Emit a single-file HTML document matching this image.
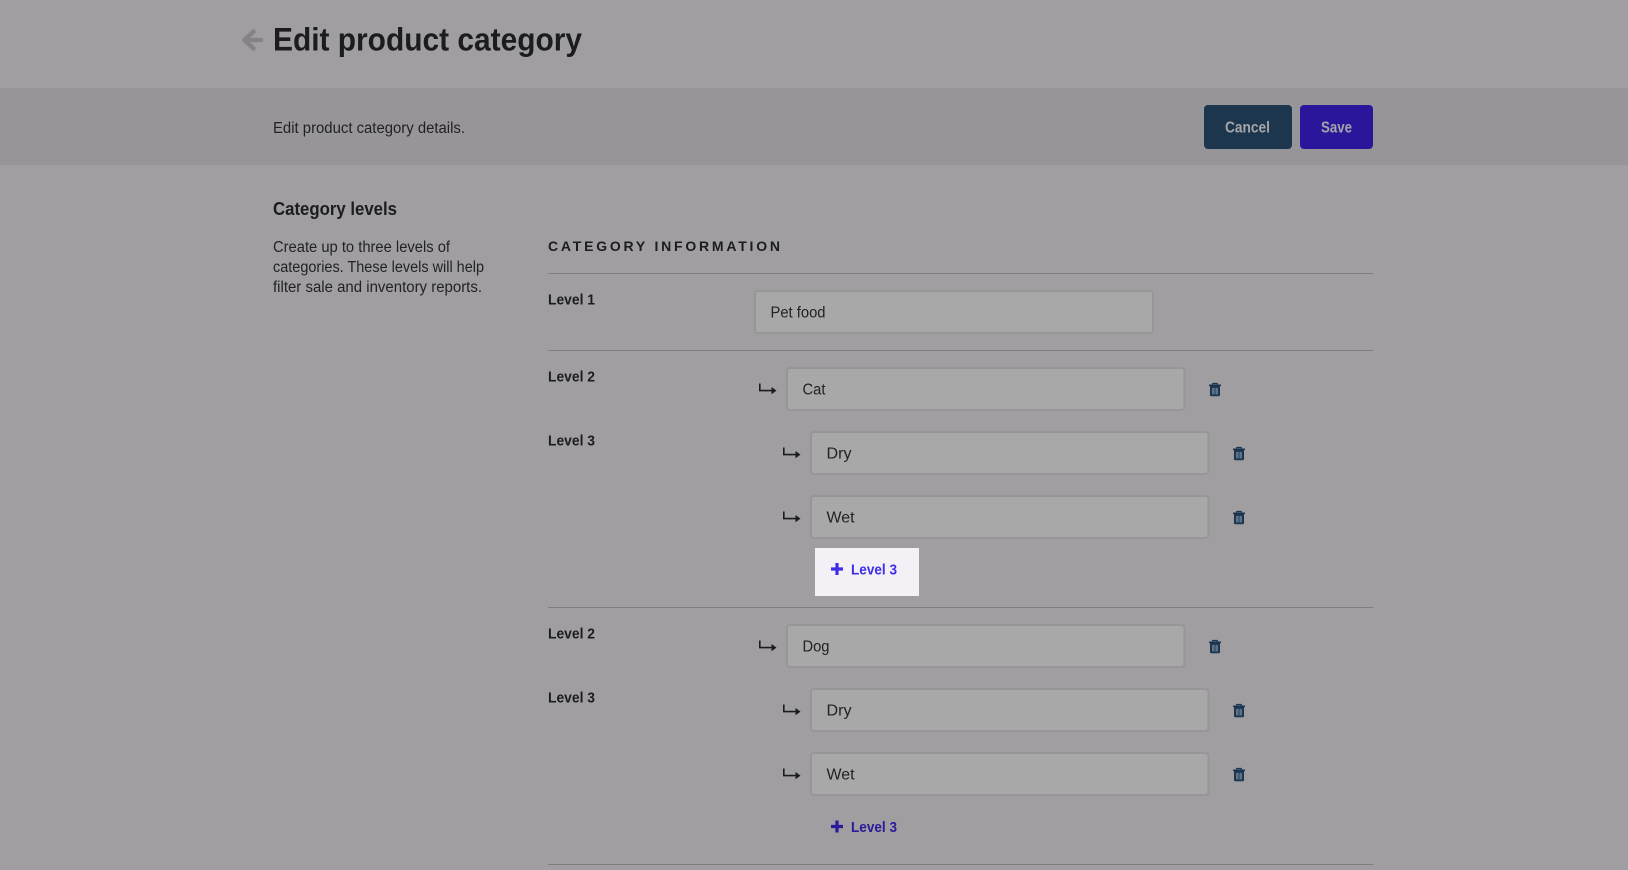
<!DOCTYPE html>
<html lang="en"><head><meta charset="utf-8"><title>Edit product category</title>
<style>
html,body{margin:0;padding:0;width:1628px;height:870px;overflow:hidden;background:#a09ea1}
svg{display:block;position:absolute;left:0;top:0}
text{font-family:"Liberation Sans",sans-serif;fill:#1c1c1f}
.b{font-weight:700}
.i{font-size:15.5px;fill:#222225}
.l{font-size:15px;font-weight:700}
.in{fill:#a8a8a8;stroke:#979598;stroke-width:2}
.ln{stroke:#7f7d80;stroke-width:1}
.ar{fill:none;stroke:#1c1c1f;stroke-width:1.6}
</style></head><body>
<svg width="1628" height="870" viewBox="0 0 1628 870" xmlns="http://www.w3.org/2000/svg">
<defs>
<g id="arrow"><path class="ar" d="M759.8 383.500V390.600H772"/><path d="M771.500 387L776.500 390.600L771.500 394.200Z" fill="#1c1c1f"/></g>
<g id="trash">
<path d="M1212.800 384.500V383.500H1217.200V384.500" fill="none" stroke="#1a3550" stroke-width="1.200"/>
<rect x="1209" y="384.500" width="12" height="1.600" fill="#1a3550"/>
<path d="M1210 386H1220V395C1220 395.800 1219.500 396.200 1219 396.200H1211C1210.500 396.200 1210 395.800 1210 395Z" fill="#1a3550"/>
<rect x="1212" y="387.800" width="6" height="6.700" fill="#5f7286"/>
<path d="M1215 387.800V394.500" stroke="#1a3550" stroke-width="0.800"/>
</g>
</defs>

<rect x="0" y="0" width="1628" height="870" fill="#a09ea1"/>
<rect x="0" y="88" width="1628" height="77" fill="#979598"/>

<path d="M261 40H246M253.500 31.500L244.500 40L253.500 48.500" fill="none" stroke="#858387" stroke-width="4.500" stroke-linecap="round" stroke-linejoin="round"/>
<text class="b" x="273" y="50.500" font-size="32.500" textLength="309" lengthAdjust="spacingAndGlyphs">Edit product category</text>
<text class="i" x="273" y="133" textLength="192" lengthAdjust="spacingAndGlyphs">Edit product category details.</text>

<rect x="1204" y="105" width="88" height="44" rx="4" fill="#1c364e"/>
<rect x="1300" y="105" width="73" height="44" rx="4" fill="#29169b"/>
<text class="b" x="1225" y="132.500" font-size="15.500" textLength="45" lengthAdjust="spacingAndGlyphs" style="fill:#a6a6a9">Cancel</text>
<text class="b" x="1321" y="132.500" font-size="15.500" textLength="31" lengthAdjust="spacingAndGlyphs" style="fill:#a6a6a9">Save</text>

<text class="b" x="273" y="215" font-size="18" textLength="124" lengthAdjust="spacingAndGlyphs">Category levels</text>
<text class="i" x="273" y="252" textLength="177" lengthAdjust="spacingAndGlyphs">Create up to three levels of</text>
<text class="i" x="273" y="272" textLength="211" lengthAdjust="spacingAndGlyphs">categories. These levels will help</text>
<text class="i" x="273" y="292" textLength="209" lengthAdjust="spacingAndGlyphs">filter sale and inventory reports.</text>

<text class="b" x="548" y="251" font-size="14" textLength="232" lengthAdjust="spacing">CATEGORY INFORMATION</text>

<line class="ln" x1="548" x2="1373" y1="273.500" y2="273.500"/>
<line class="ln" x1="548" x2="1373" y1="350.500" y2="350.500"/>
<line class="ln" x1="548" x2="1373" y1="607.500" y2="607.500"/>
<line class="ln" x1="548" x2="1373" y1="864.500" y2="864.500"/>

<text class="l" x="548" y="304.500" textLength="47" lengthAdjust="spacingAndGlyphs">Level 1</text>
<text class="l" x="548" y="381.500" textLength="47" lengthAdjust="spacingAndGlyphs">Level 2</text>
<text class="l" x="548" y="445.500" textLength="47" lengthAdjust="spacingAndGlyphs">Level 3</text>
<text class="l" x="548" y="638.500" textLength="47" lengthAdjust="spacingAndGlyphs">Level 2</text>
<text class="l" x="548" y="702.500" textLength="47" lengthAdjust="spacingAndGlyphs">Level 3</text>

<rect class="in" x="755" y="291" width="398" height="42" rx="3"/>
<rect class="in" x="787" y="368" width="397.500" height="42" rx="3"/>
<rect class="in" x="811" y="432" width="397.500" height="42" rx="3"/>
<rect class="in" x="811" y="496" width="397.500" height="42" rx="3"/>
<rect class="in" x="787" y="625" width="397.500" height="42" rx="3"/>
<rect class="in" x="811" y="689" width="397.500" height="42" rx="3"/>
<rect class="in" x="811" y="753" width="397.500" height="42" rx="3"/>

<text class="i" x="770.500" y="317.500" textLength="55" lengthAdjust="spacingAndGlyphs">Pet food</text>
<text class="i" x="802.500" y="394.500" textLength="23" lengthAdjust="spacingAndGlyphs">Cat</text>
<text class="i" x="826.500" y="458.500" textLength="25" lengthAdjust="spacingAndGlyphs">Dry</text>
<text class="i" x="826.500" y="522.500" textLength="28" lengthAdjust="spacingAndGlyphs">Wet</text>
<text class="i" x="802.500" y="651.500" textLength="27" lengthAdjust="spacingAndGlyphs">Dog</text>
<text class="i" x="826.500" y="715.500" textLength="25" lengthAdjust="spacingAndGlyphs">Dry</text>
<text class="i" x="826.500" y="779.500" textLength="28" lengthAdjust="spacingAndGlyphs">Wet</text>

<use href="#arrow"/>
<use href="#arrow" transform="translate(24 64)"/>
<use href="#arrow" transform="translate(24 128)"/>
<use href="#arrow" transform="translate(0 257)"/>
<use href="#arrow" transform="translate(24 321)"/>
<use href="#arrow" transform="translate(24 385)"/>

<use href="#trash"/>
<use href="#trash" transform="translate(24 64)"/>
<use href="#trash" transform="translate(24 128)"/>
<use href="#trash" transform="translate(0 257)"/>
<use href="#trash" transform="translate(24 321)"/>
<use href="#trash" transform="translate(24 385)"/>

<rect x="815" y="548" width="104" height="48" fill="#f3f1f5"/>
<path d="M837 563V575M831 569H843" stroke="#3d2ee8" stroke-width="3.200"/>
<text class="b" x="851" y="574.500" font-size="15" textLength="46" lengthAdjust="spacingAndGlyphs" style="fill:#3d2ee8">Level 3</text>

<path d="M837 820.500V832.500M831 826.500H843" stroke="#2a1a9c" stroke-width="3.200"/>
<text class="b" x="851" y="832" font-size="15" textLength="46" lengthAdjust="spacingAndGlyphs" style="fill:#2a1a9c">Level 3</text>
</svg>
</body></html>
